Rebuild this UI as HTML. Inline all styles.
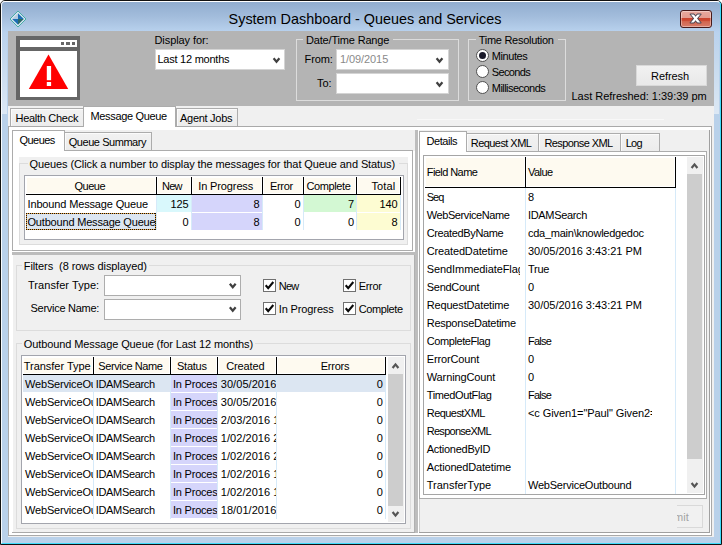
<!DOCTYPE html>
<html><head><meta charset="utf-8"><title>System Dashboard - Queues and Services</title>
<style>
html,body{margin:0;padding:0;}
body{width:722px;height:545px;position:relative;overflow:hidden;background:#fff;font-family:"Liberation Sans",sans-serif;font-size:11px;color:#000;}
div,svg{position:absolute;box-sizing:border-box;}
.t{white-space:pre;line-height:14px;font-size:11px;letter-spacing:-0.085px;color:#000;}
.a{pointer-events:none;overflow:visible;}
.combo{background:#fff;border:1px solid #d4d4d4;}
.gb{border:1px solid #dcdcdc;}
.tab{background:linear-gradient(#f2f2f2,#ececec);border:1px solid #acacac;border-bottom:none;box-shadow:inset 1px 1px 0 rgba(255,255,255,0.7);}
.tabsel{background:#fff;border:1px solid #acacac;border-bottom:none;}
.hdr{background:#fefaf0;}
.cb{background:#fff;border:1px solid #707070;}
.rb{background:#fff;border:1px solid #505050;border-radius:50%;}
</style></head><body>

<div style="left:0px;top:0px;width:722px;height:545px;background:linear-gradient(#92aed0 2px,#a3bddc 16px,#b9d2ee 31px,#b9d1ea 60px,#b9d1ea 100%);border:1px solid #111;border-radius:5px 5px 0 0;"></div>
<div style="left:1px;top:1px;width:720px;height:543px;border:1px solid #fff;border-right-color:#3fdcfb;border-bottom-color:#3fdcfb;border-left-color:rgba(255,255,255,0.9);border-radius:4px 4px 0 0;"></div>
<svg class="a" style="left:9px;top:10px" width="18" height="18" viewBox="0 0 18 18">
<polygon points="9,1 17,9 9,17 1,9" fill="rgba(225,238,245,0.8)" stroke="#3aa89e" stroke-width="0.9"/>
<polygon points="9,3.2 9,9 14.8,9" fill="#1d6fb4"/>
<polygon points="9,9 14.8,9 9,14.8" fill="#2d6a69"/>
<polygon points="9,9 3.2,9 9,14.8" fill="#1d6fb4"/>
<polygon points="9,3.2 3.2,9 9,9" fill="#b5cbe0"/>
</svg>
<div class="t" style="left:228.6px;top:9px;font-size:14.4px;line-height:20px;letter-spacing:0">System Dashboard - Queues and Services</div>
<div style="left:680px;top:10px;width:32px;height:18px;border:1px solid #471a1a;border-radius:3px;background:linear-gradient(#e9a99e 0%,#e39c90 43%,#cb442e 45%,#cd4b34 62%,#d3664f 66%,#d77c6a 100%);box-shadow:inset 0 0 0 1px rgba(255,255,255,0.38);"></div>
<svg class="a" style="left:690px;top:13px" width="12" height="11" viewBox="0 -1 12 11"><clipPath id="xo"><rect x="-1" y="-0.5" width="14" height="10"/></clipPath><clipPath id="xi"><rect x="-1" y="0.4" width="14" height="8.2"/></clipPath><g stroke-linecap="square"><g clip-path="url(#xo)"><line x1="2.2" y1="0.3" x2="9" y2="8.7" stroke="#4a4552" stroke-width="4"/><line x1="9" y1="0.3" x2="2.2" y2="8.7" stroke="#4a4552" stroke-width="4"/></g><g clip-path="url(#xi)"><line x1="2.2" y1="0.3" x2="9" y2="8.7" stroke="#fff" stroke-width="2.2"/><line x1="9" y1="0.3" x2="2.2" y2="8.7" stroke="#fff" stroke-width="2.2"/></g></g></svg>
<div style="left:2px;top:31px;width:5px;height:83px;background:linear-gradient(rgba(255,255,255,0),rgba(255,255,255,0.5));"></div>
<div style="left:714px;top:31px;width:5px;height:83px;background:linear-gradient(rgba(255,255,255,0),rgba(255,255,255,0.5));"></div>
<div style="left:8px;top:31px;width:706px;height:506px;background:#f0f0f0;"></div>
<div style="left:8px;top:31px;width:706px;height:75px;background:#b4b4b4;"></div>
<svg class="a" style="left:16px;top:36px" width="64" height="64" viewBox="0 0 64 64">
<rect x="0" y="0" width="64" height="64" fill="#666"/>
<rect x="4" y="4" width="57" height="7" fill="#fff"/>
<rect x="4" y="15" width="57" height="46" fill="#fff"/>
<rect x="45" y="6" width="3" height="3" fill="#666"/><rect x="50" y="6" width="4" height="3" fill="#666"/><rect x="56" y="6" width="3" height="3" fill="#666"/>
<polygon points="32.5,18.6 52.2,53 12.8,53" fill="#f00"/>
<rect x="30.8" y="30" width="4.3" height="14.2" fill="#fff"/><rect x="30.8" y="46" width="4.3" height="4" fill="#fff"/>
</svg>
<div class="t" style="left:154.5px;top:33px;letter-spacing:-0.087px;">Display for:</div>
<div class="combo" style="left:155px;top:49px;width:130px;height:21px;"></div>
<div class="t" style="left:157.5px;top:52px;letter-spacing:-0.247px;">Last 12 months</div>
<svg class="a" style="left:0;top:0" width="722" height="545"><polyline points="273.6,58.2 276.5,61.8 279.40000000000003,58.2" fill="none" stroke="#404040" stroke-width="2.2"/></svg>
<div class="gb" style="left:296px;top:39px;width:163px;height:62px;"></div>
<div class="t" style="left:303px;top:33px;letter-spacing:-0.174px;background:#b4b4b4;padding:0 4px 0 3px;">Date/Time Range</div>
<div class="t" style="left:304.5px;top:52px;letter-spacing:-0.085px;">From:</div>
<div class="combo" style="left:336px;top:49px;width:113px;height:21px;"></div>
<div class="t" style="left:340px;top:52px;letter-spacing:-0.085px;color:#8a8a8a;">1/09/2015</div>
<svg class="a" style="left:0;top:0" width="722" height="545"><polyline points="436.6,58.2 439.5,61.8 442.40000000000003,58.2" fill="none" stroke="#404040" stroke-width="2.2"/></svg>
<div class="t" style="left:317px;top:76px;letter-spacing:-0.085px;">To:</div>
<div class="combo" style="left:336px;top:73px;width:113px;height:21px;"></div>
<svg class="a" style="left:0;top:0" width="722" height="545"><polyline points="436.6,82.2 439.5,85.8 442.40000000000003,82.2" fill="none" stroke="#404040" stroke-width="2.2"/></svg>
<div class="gb" style="left:468px;top:39px;width:98px;height:62px;"></div>
<div class="t" style="left:475.75px;top:33px;letter-spacing:-0.282px;background:#b4b4b4;padding:0 4px 0 3px;">Time Resolution</div>
<div class="rb" style="left:476px;top:49px;width:13px;height:13px;"></div>
<div style="left:479px;top:52px;width:7px;height:7px;background:#1a1a2a;border-radius:50%;"></div>
<div class="t" style="left:491.75px;top:49px;letter-spacing:-0.419px;">Minutes</div>
<div class="rb" style="left:476px;top:65px;width:13px;height:13px;"></div>
<div class="t" style="left:491.75px;top:65px;letter-spacing:-0.635px;">Seconds</div>
<div class="rb" style="left:476px;top:81px;width:13px;height:13px;"></div>
<div class="t" style="left:491.75px;top:81px;letter-spacing:-0.537px;">Milliseconds</div>
<div style="left:636px;top:65px;width:71px;height:21px;background:linear-gradient(#f1f1f1,#e9e9e9);border:1px solid #d9d9d9;"></div>
<div class="t" style="left:651px;top:69px;letter-spacing:-0.066px;">Refresh</div>
<div class="t" style="left:571.5px;top:89px;letter-spacing:-0.023px;">Last Refreshed: 1:39:39 pm</div>
<div style="left:8px;top:126px;width:704px;height:410px;background:#fff;border:1px solid #a9a9a9;"></div>
<div class="tab" style="left:10px;top:108px;width:74px;height:18px;"></div>
<div class="t" style="left:15.5px;top:111px;letter-spacing:-0.285px;">Health Check</div>
<div class="tab" style="left:175.5px;top:108px;width:62px;height:18px;"></div>
<div class="t" style="left:180px;top:111px;letter-spacing:-0.282px;">Agent Jobs</div>
<div class="tabsel" style="left:83px;top:106px;width:93px;height:21px;"></div>
<div class="t" style="left:90.5px;top:109px;letter-spacing:-0.342px;">Message Queue</div>
<div style="left:12px;top:130px;width:403px;height:21px;background:#f0f0f0;"></div>
<div style="left:12px;top:150px;width:401px;height:101px;background:#fff;border:1px solid #acacac;"></div>
<div class="tab" style="left:64px;top:132px;width:88px;height:18px;"></div>
<div class="t" style="left:68.75px;top:135px;letter-spacing:-0.450px;">Queue Summary</div>
<div class="tabsel" style="left:12px;top:130px;width:53px;height:21px;"></div>
<div class="t" style="left:19.5px;top:133px;letter-spacing:-0.555px;">Queues</div>
<div style="left:19px;top:157px;width:389px;height:88px;background:#f0f0f0;"></div>
<div class="gb" style="left:19px;top:163px;width:389px;height:82px;"></div>
<div class="t" style="left:27.5px;top:157px;letter-spacing:-0.093px;background:#f0f0f0;padding:0 4px 0 2px;">Queues (Click a number to display the messages for that Queue and Status)</div>
<div style="left:24px;top:175px;width:380px;height:65px;background:#fff;border:1px solid #a3a5ad;"></div>
<div class="hdr" style="left:27px;top:178px;width:373px;height:15px;"></div>
<div style="left:26px;top:194px;width:375px;height:1px;background:#000;"></div>
<div style="left:156px;top:177px;width:1px;height:18px;background:#000;"></div>
<div style="left:155px;top:177px;width:1px;height:17px;background:#fff;"></div>
<div style="left:157px;top:177px;width:1px;height:17px;background:#fff;"></div>
<div style="left:191px;top:177px;width:1px;height:18px;background:#000;"></div>
<div style="left:190px;top:177px;width:1px;height:17px;background:#fff;"></div>
<div style="left:192px;top:177px;width:1px;height:17px;background:#fff;"></div>
<div style="left:262px;top:177px;width:1px;height:18px;background:#000;"></div>
<div style="left:261px;top:177px;width:1px;height:17px;background:#fff;"></div>
<div style="left:263px;top:177px;width:1px;height:17px;background:#fff;"></div>
<div style="left:303px;top:177px;width:1px;height:18px;background:#000;"></div>
<div style="left:302px;top:177px;width:1px;height:17px;background:#fff;"></div>
<div style="left:304px;top:177px;width:1px;height:17px;background:#fff;"></div>
<div style="left:356px;top:177px;width:1px;height:18px;background:#000;"></div>
<div style="left:355px;top:177px;width:1px;height:17px;background:#fff;"></div>
<div style="left:357px;top:177px;width:1px;height:17px;background:#fff;"></div>
<div style="left:400px;top:177px;width:1px;height:18px;background:#000;"></div>
<div style="left:399px;top:177px;width:1px;height:17px;background:#fff;"></div>
<div style="left:401px;top:177px;width:1px;height:17px;background:#fff;"></div>
<div class="t" style="left:74.5px;top:179px;letter-spacing:-0.477px;">Queue</div>
<div class="t" style="left:162px;top:179px;letter-spacing:-0.781px;">New</div>
<div class="t" style="left:198.25px;top:179px;letter-spacing:-0.125px;">In Progress</div>
<div class="t" style="left:270px;top:179px;letter-spacing:-0.320px;">Error</div>
<div class="t" style="left:306.5px;top:179px;letter-spacing:-0.387px;">Complete</div>
<div class="t" style="left:371.5px;top:179px;letter-spacing:0.115px;">Total</div>
<div style="left:157px;top:195px;width:34px;height:17px;background:#d9f8fc;"></div>
<div style="left:192px;top:195px;width:70px;height:17px;background:#d5d5fb;"></div>
<div style="left:192px;top:213px;width:70px;height:17px;background:#d5d5fb;"></div>
<div style="left:304px;top:195px;width:52px;height:17px;background:#d3f8d3;"></div>
<div style="left:357px;top:195px;width:43px;height:17px;background:#fdfcd2;"></div>
<div style="left:357px;top:213px;width:43px;height:17px;background:#fdfcd2;"></div>
<div style="left:156px;top:195px;width:1px;height:35px;background:#d6eaf9;"></div>
<div style="left:191px;top:195px;width:1px;height:35px;background:#d6eaf9;"></div>
<div style="left:262px;top:195px;width:1px;height:35px;background:#d6eaf9;"></div>
<div style="left:303px;top:195px;width:1px;height:35px;background:#d6eaf9;"></div>
<div style="left:356px;top:195px;width:1px;height:35px;background:#d6eaf9;"></div>
<div style="left:400px;top:195px;width:1px;height:35px;background:#d6eaf9;"></div>
<div style="left:26px;top:213px;width:130px;height:17px;background:#dce6f2;"></div>
<div style="left:26px;top:213px;width:130px;height:1px;background:repeating-linear-gradient(90deg,#111 0 1px,#eda53f 1px 2px);"></div>
<div style="left:26px;top:229px;width:130px;height:1px;background:repeating-linear-gradient(90deg,#111 0 1px,#eda53f 1px 2px);"></div>
<div style="left:26px;top:213px;width:1px;height:17px;background:repeating-linear-gradient(180deg,#111 0 1px,#eda53f 1px 2px);"></div>
<div style="left:155px;top:213px;width:1px;height:17px;background:repeating-linear-gradient(180deg,#111 0 1px,#eda53f 1px 2px);"></div>
<div class="t" style="left:27.5px;top:197px;letter-spacing:-0.146px;">Inbound Message Queue</div>
<div class="t" style="left:27.5px;top:215px;letter-spacing:-0.189px;">Outbound Message Queue</div>
<div class="t" style="right:533.5px;top:197px;">125</div>
<div class="t" style="right:462.5px;top:197px;">8</div>
<div class="t" style="right:421.5px;top:197px;">0</div>
<div class="t" style="right:368px;top:197px;">7</div>
<div class="t" style="right:324.5px;top:197px;">140</div>
<div class="t" style="right:533.5px;top:215px;">0</div>
<div class="t" style="right:462.5px;top:215px;">8</div>
<div class="t" style="right:421.5px;top:215px;">0</div>
<div class="t" style="right:368px;top:215px;">0</div>
<div class="t" style="right:324.5px;top:215px;">8</div>
<div style="left:12px;top:252px;width:403px;height:3px;background:#bcbcbc;"></div>
<div style="left:13px;top:255px;width:402px;height:278px;background:#f0f0f0;border-right:1px solid #b0b0b0;"></div>
<div style="left:12px;top:532px;width:403px;height:1px;background:#a9a9a9;"></div>
<div class="gb" style="left:16px;top:265px;width:395px;height:66px;"></div>
<div class="t" style="left:21.75px;top:258.5px;letter-spacing:-0.083px;background:#f0f0f0;padding:0 2px;">Filters  (8 rows displayed)</div>
<div class="t" style="left:28px;top:278px;letter-spacing:0.062px;">Transfer Type:</div>
<div style="left:104px;top:275px;width:137px;height:21px;background:#fff;border:1px solid #adadad;"></div>
<svg class="a" style="left:0;top:0" width="722" height="545"><polyline points="229.85,283.7 232.75,287.3 235.65,283.7" fill="none" stroke="#404040" stroke-width="2.2"/></svg>
<div class="t" style="left:30.5px;top:301px;letter-spacing:-0.277px;">Service Name:</div>
<div style="left:104px;top:299px;width:137px;height:21px;background:#fff;border:1px solid #adadad;"></div>
<svg class="a" style="left:0;top:0" width="722" height="545"><polyline points="229.85,307.2 232.75,310.8 235.65,307.2" fill="none" stroke="#404040" stroke-width="2.2"/></svg>
<div class="cb" style="left:263px;top:279px;width:13px;height:13px;"></div>
<svg class="a" style="left:263px;top:279px" width="13" height="13" viewBox="0 0 13 13"><polyline points="2.7,6.2 5.2,9.1 10.3,3" fill="none" stroke="#0a0a0a" stroke-width="2.1"/></svg>
<div class="t" style="left:278.75px;top:279px;letter-spacing:-0.781px;">New</div>
<div class="cb" style="left:263px;top:302px;width:13px;height:13px;"></div>
<svg class="a" style="left:263px;top:302px" width="13" height="13" viewBox="0 0 13 13"><polyline points="2.7,6.2 5.2,9.1 10.3,3" fill="none" stroke="#0a0a0a" stroke-width="2.1"/></svg>
<div class="t" style="left:278.75px;top:302px;letter-spacing:-0.125px;">In Progress</div>
<div class="cb" style="left:343px;top:279px;width:13px;height:13px;"></div>
<svg class="a" style="left:343px;top:279px" width="13" height="13" viewBox="0 0 13 13"><polyline points="2.7,6.2 5.2,9.1 10.3,3" fill="none" stroke="#0a0a0a" stroke-width="2.1"/></svg>
<div class="t" style="left:358.75px;top:279px;letter-spacing:-0.320px;">Error</div>
<div class="cb" style="left:343px;top:302px;width:13px;height:13px;"></div>
<svg class="a" style="left:343px;top:302px" width="13" height="13" viewBox="0 0 13 13"><polyline points="2.7,6.2 5.2,9.1 10.3,3" fill="none" stroke="#0a0a0a" stroke-width="2.1"/></svg>
<div class="t" style="left:358.75px;top:302px;letter-spacing:-0.387px;">Complete</div>
<div class="gb" style="left:16px;top:343px;width:395px;height:186px;"></div>
<div class="t" style="left:21.75px;top:337px;letter-spacing:-0.099px;background:#f0f0f0;padding:0 2px;">Outbound Message Queue (for Last 12 months)</div>
<div style="left:21px;top:355px;width:385px;height:169px;background:#fff;border:1px solid #a3a5ad;"></div>
<div class="hdr" style="left:24px;top:358px;width:361px;height:15px;"></div>
<div style="left:23px;top:374px;width:363px;height:1px;background:#000;"></div>
<div style="left:93px;top:357px;width:1px;height:18px;background:#000;"></div>
<div style="left:92px;top:357px;width:1px;height:17px;background:#fff;"></div>
<div style="left:94px;top:357px;width:1px;height:17px;background:#fff;"></div>
<div style="left:170px;top:357px;width:1px;height:18px;background:#000;"></div>
<div style="left:169px;top:357px;width:1px;height:17px;background:#fff;"></div>
<div style="left:171px;top:357px;width:1px;height:17px;background:#fff;"></div>
<div style="left:217px;top:357px;width:1px;height:18px;background:#000;"></div>
<div style="left:216px;top:357px;width:1px;height:17px;background:#fff;"></div>
<div style="left:218px;top:357px;width:1px;height:17px;background:#fff;"></div>
<div style="left:276px;top:357px;width:1px;height:18px;background:#000;"></div>
<div style="left:275px;top:357px;width:1px;height:17px;background:#fff;"></div>
<div style="left:277px;top:357px;width:1px;height:17px;background:#fff;"></div>
<div style="left:385px;top:357px;width:1px;height:18px;background:#000;"></div>
<div style="left:384px;top:357px;width:1px;height:17px;background:#fff;"></div>
<div style="left:386px;top:357px;width:1px;height:17px;background:#fff;"></div>
<div style="left:22px;top:357px;width:70.5px;height:17px;overflow:hidden;">
<div class="t" style="left:1.75px;top:2px;letter-spacing:-0.028px;">Transfer Type</div></div>
<div class="t" style="left:98.25px;top:359px;letter-spacing:-0.405px;">Service Name</div>
<div class="t" style="left:177px;top:359px;letter-spacing:-0.237px;">Status</div>
<div class="t" style="left:226.25px;top:359px;letter-spacing:-0.128px;">Created</div>
<div class="t" style="left:320.75px;top:359px;letter-spacing:-0.239px;">Errors</div>
<div style="left:23px;top:375px;width:363px;height:17px;background:#dce6f2;"></div>
<div style="left:171px;top:375px;width:46px;height:17px;background:#d5d5fb;"></div>
<div style="left:22px;top:375px;width:71px;height:17px;overflow:hidden;"><div class="t" style="left:3px;top:2px;letter-spacing:-0.17px">WebServiceOutbound</div></div>
<div class="t" style="left:95.75px;top:377px;letter-spacing:-0.332px;">IDAMSearch</div>
<div style="left:171px;top:375px;width:46px;height:17px;overflow:hidden;"><div class="t" style="left:2px;top:2px;letter-spacing:-0.22px">In Process</div></div>
<div style="left:218px;top:375px;width:58.5px;height:17px;overflow:hidden;"><div class="t" style="left:2.75px;top:2px;letter-spacing:0.06px">30/05/2016 3</div></div>
<div class="t" style="right:339.3px;top:377px;">0</div>
<div style="left:171px;top:393px;width:46px;height:17px;background:#d5d5fb;"></div>
<div style="left:22px;top:393px;width:71px;height:17px;overflow:hidden;"><div class="t" style="left:3px;top:2px;letter-spacing:-0.17px">WebServiceOutbound</div></div>
<div class="t" style="left:95.75px;top:395px;letter-spacing:-0.332px;">IDAMSearch</div>
<div style="left:171px;top:393px;width:46px;height:17px;overflow:hidden;"><div class="t" style="left:2px;top:2px;letter-spacing:-0.22px">In Process</div></div>
<div style="left:218px;top:393px;width:58.5px;height:17px;overflow:hidden;"><div class="t" style="left:2.75px;top:2px;letter-spacing:0.06px">30/05/2016 3</div></div>
<div class="t" style="right:339.3px;top:395px;">0</div>
<div style="left:171px;top:411px;width:46px;height:17px;background:#d5d5fb;"></div>
<div style="left:22px;top:411px;width:71px;height:17px;overflow:hidden;"><div class="t" style="left:3px;top:2px;letter-spacing:-0.17px">WebServiceOutbound</div></div>
<div class="t" style="left:95.75px;top:413px;letter-spacing:-0.332px;">IDAMSearch</div>
<div style="left:171px;top:411px;width:46px;height:17px;overflow:hidden;"><div class="t" style="left:2px;top:2px;letter-spacing:-0.22px">In Process</div></div>
<div style="left:218px;top:411px;width:58.5px;height:17px;overflow:hidden;"><div class="t" style="left:2.75px;top:2px;letter-spacing:0.06px">2/03/2016 1</div></div>
<div class="t" style="right:339.3px;top:413px;">0</div>
<div style="left:171px;top:429px;width:46px;height:17px;background:#d5d5fb;"></div>
<div style="left:22px;top:429px;width:71px;height:17px;overflow:hidden;"><div class="t" style="left:3px;top:2px;letter-spacing:-0.17px">WebServiceOutbound</div></div>
<div class="t" style="left:95.75px;top:431px;letter-spacing:-0.332px;">IDAMSearch</div>
<div style="left:171px;top:429px;width:46px;height:17px;overflow:hidden;"><div class="t" style="left:2px;top:2px;letter-spacing:-0.22px">In Process</div></div>
<div style="left:218px;top:429px;width:58.5px;height:17px;overflow:hidden;"><div class="t" style="left:2.75px;top:2px;letter-spacing:0.06px">1/02/2016 2</div></div>
<div class="t" style="right:339.3px;top:431px;">0</div>
<div style="left:171px;top:447px;width:46px;height:17px;background:#d5d5fb;"></div>
<div style="left:22px;top:447px;width:71px;height:17px;overflow:hidden;"><div class="t" style="left:3px;top:2px;letter-spacing:-0.17px">WebServiceOutbound</div></div>
<div class="t" style="left:95.75px;top:449px;letter-spacing:-0.332px;">IDAMSearch</div>
<div style="left:171px;top:447px;width:46px;height:17px;overflow:hidden;"><div class="t" style="left:2px;top:2px;letter-spacing:-0.22px">In Process</div></div>
<div style="left:218px;top:447px;width:58.5px;height:17px;overflow:hidden;"><div class="t" style="left:2.75px;top:2px;letter-spacing:0.06px">1/02/2016 2</div></div>
<div class="t" style="right:339.3px;top:449px;">0</div>
<div style="left:171px;top:465px;width:46px;height:17px;background:#d5d5fb;"></div>
<div style="left:22px;top:465px;width:71px;height:17px;overflow:hidden;"><div class="t" style="left:3px;top:2px;letter-spacing:-0.17px">WebServiceOutbound</div></div>
<div class="t" style="left:95.75px;top:467px;letter-spacing:-0.332px;">IDAMSearch</div>
<div style="left:171px;top:465px;width:46px;height:17px;overflow:hidden;"><div class="t" style="left:2px;top:2px;letter-spacing:-0.22px">In Process</div></div>
<div style="left:218px;top:465px;width:58.5px;height:17px;overflow:hidden;"><div class="t" style="left:2.75px;top:2px;letter-spacing:0.06px">1/02/2016 1</div></div>
<div class="t" style="right:339.3px;top:467px;">0</div>
<div style="left:171px;top:483px;width:46px;height:17px;background:#d5d5fb;"></div>
<div style="left:22px;top:483px;width:71px;height:17px;overflow:hidden;"><div class="t" style="left:3px;top:2px;letter-spacing:-0.17px">WebServiceOutbound</div></div>
<div class="t" style="left:95.75px;top:485px;letter-spacing:-0.332px;">IDAMSearch</div>
<div style="left:171px;top:483px;width:46px;height:17px;overflow:hidden;"><div class="t" style="left:2px;top:2px;letter-spacing:-0.22px">In Process</div></div>
<div style="left:218px;top:483px;width:58.5px;height:17px;overflow:hidden;"><div class="t" style="left:2.75px;top:2px;letter-spacing:0.06px">1/02/2016 1</div></div>
<div class="t" style="right:339.3px;top:485px;">0</div>
<div style="left:171px;top:501px;width:46px;height:17px;background:#d5d5fb;"></div>
<div style="left:22px;top:501px;width:71px;height:17px;overflow:hidden;"><div class="t" style="left:3px;top:2px;letter-spacing:-0.17px">WebServiceOutbound</div></div>
<div class="t" style="left:95.75px;top:503px;letter-spacing:-0.332px;">IDAMSearch</div>
<div style="left:171px;top:501px;width:46px;height:17px;overflow:hidden;"><div class="t" style="left:2px;top:2px;letter-spacing:-0.22px">In Process</div></div>
<div style="left:218px;top:501px;width:58.5px;height:17px;overflow:hidden;"><div class="t" style="left:2.75px;top:2px;letter-spacing:0.06px">18/01/2016 1</div></div>
<div class="t" style="right:339.3px;top:503px;">0</div>
<div style="left:93px;top:375px;width:1px;height:144px;background:#d6eaf9;"></div>
<div style="left:170px;top:375px;width:1px;height:144px;background:#d6eaf9;"></div>
<div style="left:217px;top:375px;width:1px;height:144px;background:#d6eaf9;"></div>
<div style="left:276px;top:375px;width:1px;height:144px;background:#d6eaf9;"></div>
<div style="left:385px;top:375px;width:1px;height:144px;background:#d6eaf9;"></div>
<div style="left:388px;top:357px;width:16px;height:165px;background:#f0f0f0;"></div>
<div style="left:388px;top:374px;width:15px;height:132px;background:#cdcdcd;"></div>
<svg class="a" style="left:0;top:0" width="722" height="545"><polyline points="392.6,368.0 395.5,364.4 398.40000000000003,368.0" fill="none" stroke="#555" stroke-width="2.2"/></svg>
<svg class="a" style="left:0;top:0" width="722" height="545"><polyline points="392.6,511.99999999999994 395.5,515.5999999999999 398.40000000000003,511.99999999999994" fill="none" stroke="#555" stroke-width="2.2"/></svg>
<div style="left:415px;top:130px;width:3px;height:403px;background:#bdbdbd;"></div>
<div style="left:417px;top:119px;width:247px;height:1px;background:#f8f8f8;"></div>
<div style="left:419px;top:130px;width:291px;height:403px;background:#f0f0f0;"></div>
<div style="left:709px;top:130px;width:1px;height:403px;background:#a0a0a0;"></div>
<div style="left:419px;top:152px;width:1px;height:381px;background:#cfcfcf;"></div>
<div style="left:419px;top:532px;width:291px;height:1px;background:#a0a0a0;"></div>
<div style="left:419px;top:151px;width:288px;height:348px;background:#fff;border:1px solid #acacac;"></div>
<div class="tab" style="left:466px;top:133px;width:73px;height:18px;"></div>
<div class="t" style="left:470.75px;top:136px;letter-spacing:-0.553px;">Request XML</div>
<div class="tab" style="left:538px;top:133px;width:83px;height:18px;"></div>
<div class="t" style="left:544.5px;top:136px;letter-spacing:-0.599px;">Response XML</div>
<div class="tab" style="left:620px;top:133px;width:40px;height:18px;"></div>
<div class="t" style="left:625.75px;top:136px;letter-spacing:-0.743px;">Log</div>
<div class="tabsel" style="left:419px;top:131px;width:48px;height:21px;"></div>
<div class="t" style="left:426.5px;top:134px;letter-spacing:-0.437px;">Details</div>
<div style="left:423px;top:155px;width:282px;height:340px;background:#fff;border:1px solid #a5a5a5;"></div>
<div class="hdr" style="left:426px;top:158px;width:249px;height:28px;"></div>
<div style="left:425px;top:187px;width:251px;height:1px;background:#000;"></div>
<div style="left:525px;top:157px;width:1px;height:31px;background:#000;"></div>
<div style="left:524px;top:157px;width:1px;height:30px;background:#fff;"></div>
<div style="left:526px;top:157px;width:1px;height:30px;background:#fff;"></div>
<div style="left:675px;top:157px;width:1px;height:31px;background:#000;"></div>
<div style="left:674px;top:157px;width:1px;height:30px;background:#fff;"></div>
<div style="left:676px;top:157px;width:1px;height:30px;background:#fff;"></div>
<div class="t" style="left:426.75px;top:165px;letter-spacing:-0.569px;">Field Name</div>
<div class="t" style="left:528px;top:165px;letter-spacing:-0.550px;">Value</div>
<div style="left:525px;top:188px;width:1px;height:306px;background:#d6eaf9;"></div>
<div style="left:675px;top:188px;width:1px;height:306px;background:#d6eaf9;"></div>
<div style="left:424px;top:189px;width:95.5px;height:17px;overflow:hidden;"><div class="t" style="left:2.75px;top:1px;letter-spacing:-0.977px;">Seq</div></div>
<div style="left:526px;top:189px;width:147px;height:17px;overflow:hidden;"><div class="t" style="left:2px;top:1px;letter-spacing:-0.085px;">8</div></div>
<div style="left:424px;top:207px;width:95.5px;height:17px;overflow:hidden;"><div class="t" style="left:2.75px;top:1px;letter-spacing:-0.409px;">WebServiceName</div></div>
<div style="left:526px;top:207px;width:147px;height:17px;overflow:hidden;"><div class="t" style="left:2px;top:1px;letter-spacing:-0.332px;">IDAMSearch</div></div>
<div style="left:424px;top:225px;width:95.5px;height:17px;overflow:hidden;"><div class="t" style="left:2.75px;top:1px;letter-spacing:-0.370px;">CreatedByName</div></div>
<div style="left:526px;top:225px;width:147px;height:17px;overflow:hidden;"><div class="t" style="left:2px;top:1px;letter-spacing:-0.254px;">cda_main\knowledgedoc</div></div>
<div style="left:424px;top:243px;width:95.5px;height:17px;overflow:hidden;"><div class="t" style="left:2.75px;top:1px;letter-spacing:-0.145px;">CreatedDatetime</div></div>
<div style="left:526px;top:243px;width:147px;height:17px;overflow:hidden;"><div class="t" style="left:2px;top:1px;letter-spacing:-0.023px;">30/05/2016 3:43:21 PM</div></div>
<div style="left:424px;top:261px;width:95.5px;height:17px;overflow:hidden;"><div class="t" style="left:2.75px;top:1px;letter-spacing:-0.085px;">SendImmediateFlag</div></div>
<div style="left:526px;top:261px;width:147px;height:17px;overflow:hidden;"><div class="t" style="left:2px;top:1px;letter-spacing:-0.281px;">True</div></div>
<div style="left:424px;top:279px;width:95.5px;height:17px;overflow:hidden;"><div class="t" style="left:2.75px;top:1px;letter-spacing:-0.286px;">SendCount</div></div>
<div style="left:526px;top:279px;width:147px;height:17px;overflow:hidden;"><div class="t" style="left:2px;top:1px;letter-spacing:-0.085px;">0</div></div>
<div style="left:424px;top:297px;width:95.5px;height:17px;overflow:hidden;"><div class="t" style="left:2.75px;top:1px;letter-spacing:-0.169px;">RequestDatetime</div></div>
<div style="left:526px;top:297px;width:147px;height:17px;overflow:hidden;"><div class="t" style="left:2px;top:1px;letter-spacing:-0.023px;">30/05/2016 3:43:21 PM</div></div>
<div style="left:424px;top:315px;width:95.5px;height:17px;overflow:hidden;"><div class="t" style="left:2.75px;top:1px;letter-spacing:-0.279px;">ResponseDatetime</div></div>
<div style="left:424px;top:333px;width:95.5px;height:17px;overflow:hidden;"><div class="t" style="left:2.75px;top:1px;letter-spacing:-0.419px;">CompleteFlag</div></div>
<div style="left:526px;top:333px;width:147px;height:17px;overflow:hidden;"><div class="t" style="left:2px;top:1px;letter-spacing:-0.758px;">False</div></div>
<div style="left:424px;top:351px;width:95.5px;height:17px;overflow:hidden;"><div class="t" style="left:2.75px;top:1px;letter-spacing:-0.138px;">ErrorCount</div></div>
<div style="left:526px;top:351px;width:147px;height:17px;overflow:hidden;"><div class="t" style="left:2px;top:1px;letter-spacing:-0.085px;">0</div></div>
<div style="left:424px;top:369px;width:95.5px;height:17px;overflow:hidden;"><div class="t" style="left:2.75px;top:1px;letter-spacing:-0.123px;">WarningCount</div></div>
<div style="left:526px;top:369px;width:147px;height:17px;overflow:hidden;"><div class="t" style="left:2px;top:1px;letter-spacing:-0.085px;">0</div></div>
<div style="left:424px;top:387px;width:95.5px;height:17px;overflow:hidden;"><div class="t" style="left:2.75px;top:1px;letter-spacing:-0.379px;">TimedOutFlag</div></div>
<div style="left:526px;top:387px;width:147px;height:17px;overflow:hidden;"><div class="t" style="left:2px;top:1px;letter-spacing:-0.758px;">False</div></div>
<div style="left:424px;top:405px;width:95.5px;height:17px;overflow:hidden;"><div class="t" style="left:2.75px;top:1px;letter-spacing:-0.552px;">RequestXML</div></div>
<div style="left:526px;top:405px;width:126px;height:17px;overflow:hidden;"><div class="t" style="left:2px;top:1px;letter-spacing:-0.085px;">&lt;c Given1="Paul" Given2=</div></div>
<div style="left:424px;top:423px;width:95.5px;height:17px;overflow:hidden;"><div class="t" style="left:2.75px;top:1px;letter-spacing:-0.728px;">ResponseXML</div></div>
<div style="left:424px;top:441px;width:95.5px;height:17px;overflow:hidden;"><div class="t" style="left:2.75px;top:1px;letter-spacing:-0.268px;">ActionedByID</div></div>
<div style="left:424px;top:459px;width:95.5px;height:17px;overflow:hidden;"><div class="t" style="left:2.75px;top:1px;letter-spacing:-0.164px;">ActionedDatetime</div></div>
<div style="left:424px;top:477px;width:95.5px;height:17px;overflow:hidden;"><div class="t" style="left:2.75px;top:1px;letter-spacing:-0.002px;">TransferType</div></div>
<div style="left:526px;top:477px;width:147px;height:17px;overflow:hidden;"><div class="t" style="left:2px;top:1px;letter-spacing:-0.223px;">WebServiceOutbound</div></div>
<div style="left:687px;top:157px;width:16px;height:336px;background:#f0f0f0;"></div>
<div style="left:687px;top:174px;width:15px;height:285px;background:#cdcdcd;"></div>
<svg class="a" style="left:0;top:0" width="722" height="545"><polyline points="691.6,168.0 694.5,164.39999999999998 697.4,168.0" fill="none" stroke="#555" stroke-width="2.2"/></svg>
<svg class="a" style="left:0;top:0" width="722" height="545"><polyline points="691.6,483.0 694.5,486.6 697.4,483.0" fill="none" stroke="#555" stroke-width="2.2"/></svg>
<div style="left:677px;top:505px;width:27px;height:23px;overflow:hidden;">
<div style="left:-46px;top:0px;width:72px;height:23px;background:#f1f1f1;border:1px solid #d9d9d9;"></div>
<div class="t" style="left:-22.5px;top:5px;color:#a3a3a3;font-size:11px;letter-spacing:0">Submit</div></div>
</body></html>
